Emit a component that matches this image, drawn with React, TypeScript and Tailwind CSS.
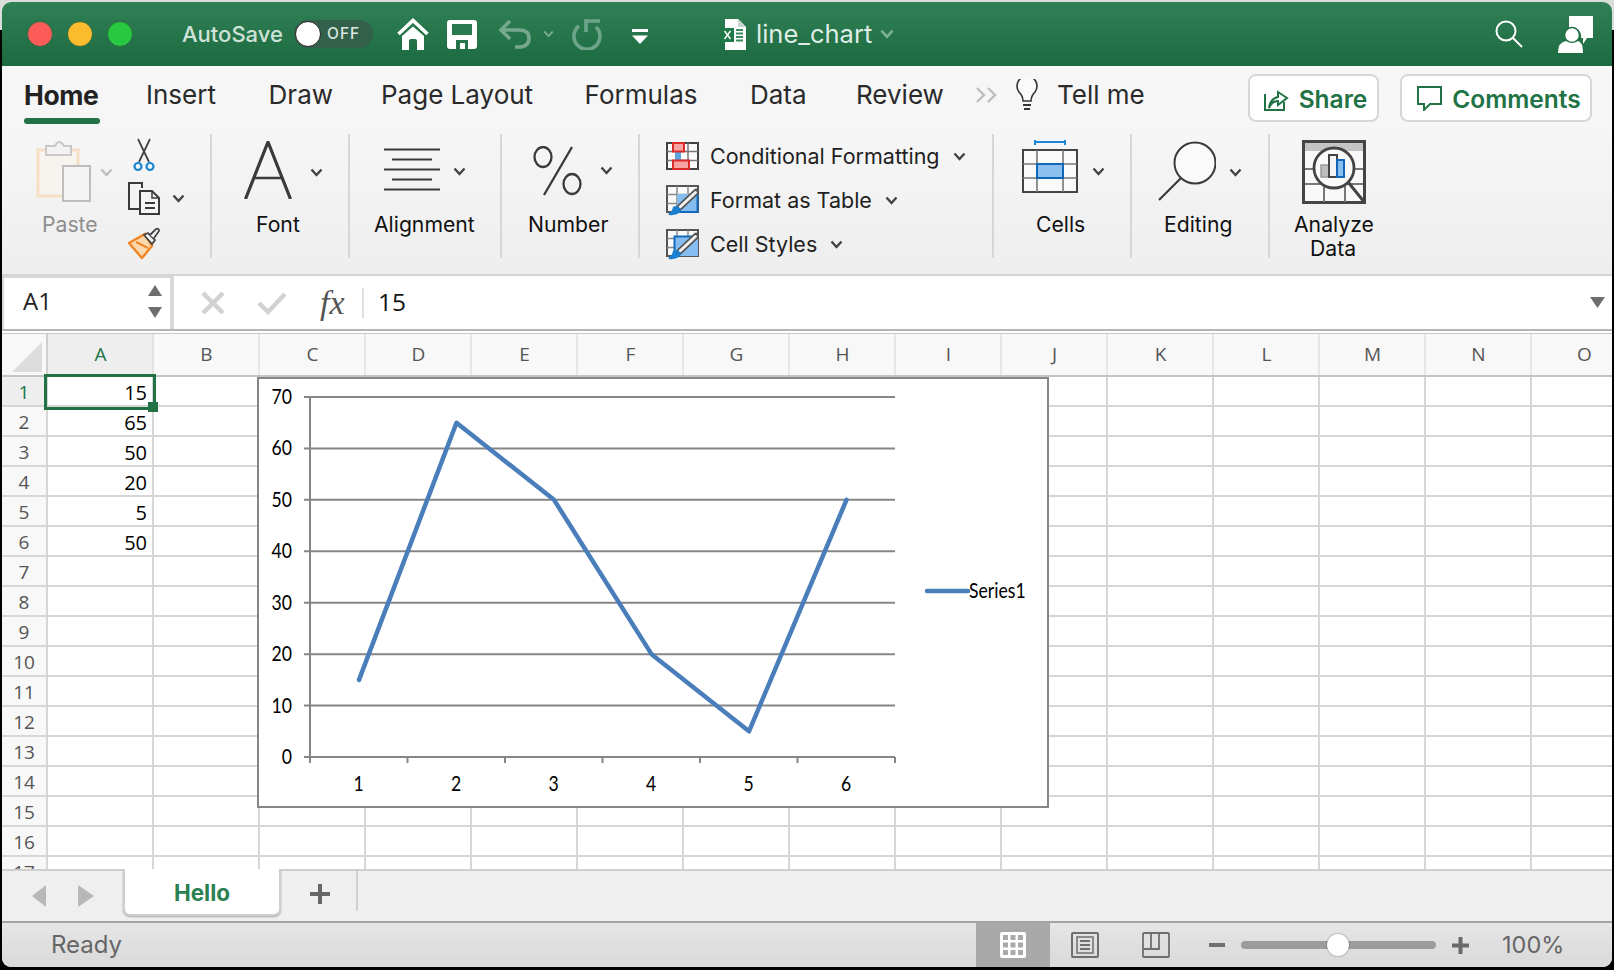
import React from "react";

const Chev = ({ className = "", color = "#444" }: { className?: string; color?: string }) => (
  <svg width="13" height="9" viewBox="0 0 13 9" className={className} fill="none">
    <path d="M1.5 1.5 L6.5 7 L11.5 1.5" stroke={color} strokeWidth="2.4" />
  </svg>
);

const Home = () => (
  <svg width="32" height="32" viewBox="0 0 32 32" className="ml-[24px] mt-[-1px]">
    <path d="M1.5 16 L16 2.5 L30.5 16" stroke="#fff" strokeWidth="3.5" fill="none" />
    <path d="M5 18 L16 8.5 L27 18 V32 H20 V23 Q20 21 18 21 H14 Q12 21 12 23 V32 H5Z" fill="#fff" />
  </svg>
);
const Save = () => (
  <svg width="30" height="29" viewBox="0 0 30 29" className="ml-[18px]">
    <path d="M3 0 H27 Q30 0 30 3 V26 Q30 29 27 29 H3 Q0 29 0 26 V3 Q0 0 3 0Z" fill="#fff" />
    <rect x="5" y="4" width="20" height="11" fill="#2a7a50" />
    <path d="M9 29 V20 H21 V29 H18 V23 H13 V29Z" fill="#26744b" />
  </svg>
);
const Undo = () => (
  <svg width="33" height="30" viewBox="0 0 33 30" className="ml-[21px]" fill="none" stroke="#76a88e" strokeWidth="3.6">
    <path d="M12 2 L3 11 L12 20" />
    <path d="M3 11 H21 Q31 11 31 19 Q31 28 21 28 H17" />
  </svg>
);
const Redo = () => (
  <svg width="32" height="32" viewBox="0 0 32 32" className="ml-[17px]" fill="none" stroke="#6ea58a" strokeWidth="3.6">
    <path d="M15 3 H29" />
    <path d="M15 1 V14" />
    <path d="M8 8 A13 13 0 1 0 25 9" />
  </svg>
);
const Customize = () => (
  <svg width="16" height="15" viewBox="0 0 16 15" className="ml-[29px] mt-[4px]">
    <rect x="0" y="0" width="16" height="3" fill="#fff" />
    <path d="M0 6.5 H16 L8 15Z" fill="#fff" />
  </svg>
);
const DocIcon = () => (
  <svg width="25" height="31" viewBox="0 0 25 31" className="ml-[73px]">
    <path d="M4 0 H17 L25 8 V31 H4Z" fill="#fff" />
    <path d="M17 0 V8 H25Z" fill="#c8d8cf" />
    <rect x="0" y="9" width="13" height="14" fill="#1f7a4a" />
    <path d="M3.5 12 L9.5 20 M9.5 12 L3.5 20" stroke="#fff" strokeWidth="1.5" />
    <path d="M15 11 H22 M15 14.5 H22 M15 18 H22 M15 21.5 H22" stroke="#3a8a60" strokeWidth="2" />
  </svg>
);
const Person = () => (
  <svg width="36" height="37" viewBox="0 0 36 37">
    <path d="M12 0 H36 V22 H30 L26 28 V22 H24 A9 9 0 0 0 12 12Z" fill="#fff" />
    <circle cx="15" cy="19" r="7.5" fill="#fff" stroke="#216f46" strokeWidth="1.5" />
    <path d="M1 37 Q1 26 9 25 Q15 29 21 25 Q26 26 26 37Z" fill="#fff" />
  </svg>
);

const Paste = () => (
  <svg width="60" height="62" viewBox="0 0 60 62" className="ml-[34px]">
    <rect x="2" y="10" width="40" height="46" fill="#f7f4f0" stroke="#f7dfc6" strokeWidth="3" />
    <path d="M10 6 H19 Q23 -2 28 6 H35 V15 H10Z" fill="#f3f3f3" stroke="#c9c9c9" strokeWidth="2" />
    <rect x="27" y="26" width="27" height="35" fill="#f4f4f4" stroke="#bdbdbd" strokeWidth="2" />
  </svg>
);
const Scissors = () => (
  <svg width="22" height="34" viewBox="0 0 22 34" className="ml-[5px]" fill="none">
    <path d="M5 1 L16 24 M17 1 L6 24" stroke="#444" strokeWidth="1.8" />
    <circle cx="5" cy="28.5" r="3.5" stroke="#1b87d4" strokeWidth="2.2" />
    <circle cx="17" cy="28.5" r="3.5" stroke="#1b87d4" strokeWidth="2.2" />
  </svg>
);
const Copy = () => (
  <svg width="32" height="33" viewBox="0 0 32 33" fill="none">
    <path d="M14 6 V1 H1 V27 H12" stroke="#3a3a3a" strokeWidth="2" />
    <path d="M12 9 H24 L31 16 V32 H12Z" fill="#f5f5f5" stroke="#3a3a3a" strokeWidth="2" />
    <path d="M24 9 V16 H31" stroke="#3a3a3a" strokeWidth="1.5" />
    <path d="M17 21 H27 M17 26 H27" stroke="#3a3a3a" strokeWidth="2" />
  </svg>
);
const Brush = () => (
  <svg width="32" height="32" viewBox="0 0 32 32" fill="none">
    <path d="M1 16 L17 7 L24 19 L14 31Z" fill="#fbd9ad" stroke="#ee8526" strokeWidth="2.4" />
    <path d="M8 15 L20 21" stroke="#ee8526" strokeWidth="2" />
    <path d="M16 8 L24 17 L27 13 L20 6Z" fill="#f5f5f5" stroke="#444" strokeWidth="1.8" />
    <path d="M22 8 L28 2 Q31 1 31 4 L26 11" fill="#f5f5f5" stroke="#444" strokeWidth="1.8" />
  </svg>
);
const BigA = () => (
  <svg width="48" height="58" viewBox="0 0 48 58" fill="none" stroke="#3a3a3a">
    <path d="M1.5 58 L24 1 L46.5 58" strokeWidth="3.2" />
    <path d="M10 37 H38" strokeWidth="2.6" />
  </svg>
);
const AlignIcon = () => (
  <svg width="56" height="43" viewBox="0 0 56 43" stroke="#3a3a3a" strokeWidth="2.2">
    <path d="M0 1.5 H56 M8 11.5 H48 M0 21.5 H56 M8 31.5 H48 M0 41.5 H56" />
  </svg>
);
const Percent = () => (
  <svg width="50" height="50" viewBox="0 0 50 50" fill="none" stroke="#3a3a3a" strokeWidth="2.3">
    <ellipse cx="10" cy="11" rx="8.5" ry="10" />
    <ellipse cx="39" cy="38" rx="8.5" ry="10" />
    <path d="M39 1 L11 49" />
  </svg>
);
const CondFmt = () => (
  <svg width="33" height="28" viewBox="0 0 33 28" fill="none">
    <rect x="1" y="1" width="31" height="26" fill="#fafafa" stroke="#444" strokeWidth="2" />
    <path d="M11 1 V27 M22 1 V27 M1 9.5 H32 M1 18.5 H32" stroke="#777" strokeWidth="1.5" />
    <rect x="9" y="9" width="6" height="10" fill="#5aa5e0" />
    <rect x="7" y="1" width="11" height="8.5" fill="#f6a3a3" stroke="#dc2a2a" strokeWidth="2" />
    <rect x="7" y="18.5" width="16" height="8.5" fill="#f6a3a3" stroke="#dc2a2a" strokeWidth="2" />
  </svg>
);
const TableBrush = ({ head = false }: { head?: boolean }) => (
  <svg width="33" height="31" viewBox="0 0 33 31" fill="none">
    <rect x="1" y="1" width="31" height="26" fill="#fafafa" stroke="#555" strokeWidth="2" />
    <path d="M11 1 V27 M22 1 V27 M1 9.5 H32 M1 18.5 H32" stroke="#888" strokeWidth="1.5" />
    {head ? (
      <path d="M9 27 V8 H32 V27Z" fill="#86bdf0" />
    ) : (
      <path d="M11 27 V9 H31 V27Z" fill="#86bdf0" />
    )}
    {head ? <path d="M8.5 27 V7.5 H32" stroke="#1269bd" strokeWidth="2" /> : <path d="M31.5 9 V27 H11" stroke="#1269bd" strokeWidth="2" />}
    <path d="M13 23 L30 7" stroke="#555" strokeWidth="6.5" strokeLinecap="round" />
    <path d="M14 22 L29.5 7.5" stroke="#f2f2f2" strokeWidth="3" strokeLinecap="round" />
    <path d="M7 22 Q11 19 15 24 Q15 29 7 30 Q1 31 3 28 Q6 27 7 22Z" fill="#1b7fd0" />
  </svg>
);
const CellsIcon = () => (
  <svg width="56" height="53" viewBox="0 0 56 53" fill="none">
    <path d="M13 2 H43 M13 0 V5 M43 0 V5" stroke="#1b87d4" strokeWidth="2" />
    <rect x="1" y="10" width="54" height="42" fill="#fafafa" stroke="#444" strokeWidth="2" />
    <path d="M15 10 V52 M41 10 V52 M1 24 H55 M1 38 H55" stroke="#777" strokeWidth="1.6" />
    <rect x="15" y="24" width="26" height="14" fill="#8cc0ee" stroke="#1166b8" strokeWidth="2" />
  </svg>
);
const Magnifier = () => (
  <svg width="58" height="60" viewBox="0 0 58 60" fill="none" stroke="#3a3a3a">
    <circle cx="37" cy="22" r="20.5" fill="#fafafa" strokeWidth="2" />
    <path d="M1 59 L23 37" strokeWidth="2.2" />
  </svg>
);
const Analyze = () => (
  <svg width="64" height="64" viewBox="0 0 64 64" fill="none">
    <rect x="1.5" y="1.5" width="61" height="61" fill="#f9f9f9" stroke="#444" strokeWidth="3" />
    <rect x="3" y="3" width="58" height="8" fill="#c3c3c3" />
    <path d="M3 29 H61 M3 44 H61 M22 44 V62 M43 44 V62" stroke="#777" strokeWidth="2" />
    <circle cx="32" cy="28" r="20" fill="#fafafa" stroke="#444" strokeWidth="2.8" />
    <rect x="19" y="25" width="9" height="12" fill="#bdbdbd" stroke="#999" strokeWidth="1.5" />
    <rect x="27" y="15" width="8" height="22" fill="#f4f4f4" stroke="#444" strokeWidth="2" />
    <rect x="35" y="20" width="7" height="17" fill="#86bff0" stroke="#1166b8" strokeWidth="2" />
    <path d="M46 42 L63 63" stroke="#444" strokeWidth="3" />
  </svg>
);

const Sep = () => <div className="w-[2px] h-[124px] bg-[#d6d6d6] shrink-0 mt-[4px]" />;

const Style = ({ icon, label, chev }: { icon: React.ReactNode; label: string; chev: string }) => (
  <div className="h-[44px] flex items-center">
    <div className="w-[44px] h-[30px] flex items-center">{icon}</div>
    <span className="text-[21.5px] leading-[30px] text-[#1f1f1f] whitespace-nowrap">{label}</span>
    <Chev className={chev} />
  </div>
);

const columns = ["A", "B", "C", "D", "E", "F", "G", "H", "I", "J", "K", "L", "M", "N", "O", "P"];
const values: Record<number, string> = { 1: "15", 2: "65", 3: "50", 4: "20", 5: "5", 6: "50" };
const rows = Array.from({ length: 17 }, (_, i) => i + 1);

const yOf = (v: number) => 398 - 377 + ((70 - v) * 360) / 70;
const points = [15, 65, 50, 20, 5, 50];
const linePts = points.map((v, i) => `${101 + i * 97.5},${yOf(v)}`).join(" ");

const ChartText = ({ x, y, anchor, children }: { x: number; y: number; anchor: "start" | "middle" | "end"; children: React.ReactNode }) => (
  <text transform={`translate(${x} ${y}) scale(0.86 1)`} textAnchor={anchor} fontSize="20.5" fill="#000">
    {children}
  </text>
);

const Chart = () => (
  <div className="absolute left-[257px] top-[377px] w-[792px] h-[431px] bg-white border-2 border-[#868686]">
    <svg width="788" height="427" viewBox="1 3 788 427" className="font-['Lato',sans-serif]">
      {[0, 10, 20, 30, 40, 50, 60, 70].map((v) => (
        <g key={v}>
          <line x1={46} x2={637} y1={yOf(v)} y2={yOf(v)} stroke="#868686" strokeWidth="2" />
          <ChartText x={34} y={yOf(v) + 7} anchor="end">
            {v}
          </ChartText>
        </g>
      ))}
      <line x1={52} x2={52} y1={yOf(70)} y2={yOf(0) + 6} stroke="#868686" strokeWidth="2" />
      {[1, 2, 3, 4, 5, 6].map((n) => (
        <g key={n}>
          <line x1={52 + n * 97.5} x2={52 + n * 97.5} y1={yOf(0)} y2={yOf(0) + 6} stroke="#868686" strokeWidth="2" />
          <ChartText x={100.6 + (n - 1) * 97.5} y={yOf(0) + 34} anchor="middle">
            {n}
          </ChartText>
        </g>
      ))}
      <polyline points={linePts} fill="none" stroke="#4a7ebb" strokeWidth="4.5" strokeLinecap="round" strokeLinejoin="round" />
      <line x1={669} x2={710} y1={215} y2={215} stroke="#4a7ebb" strokeWidth="4.5" strokeLinecap="round" />
      <ChartText x={711} y={222} anchor="start">
        Series1
      </ChartText>
    </svg>
  </div>
);

export default function App() {
  return (
    <div className="w-[1614px] h-[970px] bg-[linear-gradient(to_bottom,#d9dedb_0,#d9dedb_30px,#000_30px)] overflow-hidden pt-[2px] pl-[2px] font-['Inter',sans-serif]">
      <div className="w-[1610px] h-[965px] rounded-[9px] overflow-hidden flex flex-col bg-white relative">
        {/* title bar */}
        <div className="h-[64px] shrink-0 bg-gradient-to-b from-[#308056] to-[#1c6a40] flex items-center text-white pl-[25px]">
          <div className="w-[26px] h-[26px] rounded-full bg-[#fc5c57] border border-[#2b6a48]" />
          <div className="w-[26px] h-[26px] rounded-full bg-[#fdbb2e] border border-[#2b6a48] ml-[14px]" />
          <div className="w-[26px] h-[26px] rounded-full bg-[#28c840] border border-[#2b6a48] ml-[14px]" />
          <span className="ml-[49px] text-[22px] font-medium text-[#cfe2d8] w-[112px] whitespace-nowrap">AutoSave</span>
          <div className="w-[79px] h-[28px] rounded-full bg-[#33604a] flex items-center pl-[1px]">
            <div className="w-[26px] h-[26px] rounded-full bg-white border border-[#222]" />
            <span className="ml-[6px] text-[15.5px] font-medium tracking-[1px] text-[#dbe7e0]">OFF</span>
          </div>
          <Home />
          <Save />
          <Undo />
          <Chev className="ml-[12px] w-[11px] h-[8px]" color="#76a88e" />
          <Redo />
          <Customize />
          <DocIcon />
          <span className="ml-[10px] text-[25.5px] text-[#dfece5] whitespace-nowrap w-[122px]">line_chart</span>
          <Chev className="w-[18px] h-[10px]" color="#7fb097" />
          <svg width="28" height="28" viewBox="0 0 28 28" fill="none" stroke="#fff" strokeWidth="2" className="ml-[599px]">
            <circle cx="11" cy="11" r="9.5" />
            <path d="M18 18 L27 27" />
          </svg>
          <div className="ml-[34px]">
            <Person />
          </div>
        </div>

        {/* tab row */}
        <div className="h-[64px] shrink-0 bg-[#f6f6f6] flex text-[26px] text-[#2a2a2a] leading-[32px]">
          <div className="ml-[22px] w-[76px] shrink-0 pt-[13px] flex flex-col">
            <span className="font-bold text-[26.5px] tracking-[-0.4px] text-[#222]">Home</span>
            <div className="mt-[7px] h-[6px] rounded-full bg-[#217346]" />
          </div>
          <span className="ml-[46px] w-[122.6px] shrink-0 pt-[13px]">Insert</span>
          <span className="w-[112.4px] shrink-0 pt-[13px]">Draw</span>
          <span className="w-[203.6px] shrink-0 pt-[13px] whitespace-nowrap">Page Layout</span>
          <span className="w-[165.4px] shrink-0 pt-[13px]">Formulas</span>
          <span className="w-[106px] shrink-0 pt-[13px]">Data</span>
          <span className="w-[119px] shrink-0 pt-[13px]">Review</span>
          <svg width="24" height="18" viewBox="0 0 24 18" fill="none" stroke="#bdbdbd" strokeWidth="2.4" className="shrink-0 mt-[20px]">
            <path d="M2 2 L9 9 L2 16 M13 2 L20 9 L13 16" />
          </svg>
          <svg width="24" height="32" viewBox="0 0 24 32" fill="none" stroke="#333" strokeWidth="1.6" className="shrink-0 ml-[16px] mt-[13px]">
            <path d="M8 22 Q8 17 4 13 A10 10 0 1 1 20 13 Q16 17 16 22Z" fill="#fafafa" />
            <path d="M8 26 H16 M9 30 H15" strokeWidth="2" />
          </svg>
          <span className="ml-[18px] w-[191px] shrink-0 pt-[13px] whitespace-nowrap">Tell me</span>
          <div className="shrink-0 mt-[8px] w-[131px] h-[48px] pl-[4px] rounded-[8px] bg-white border-2 border-[#d6d6d6] flex items-center justify-center gap-[10px] text-[#217346] font-semibold text-[24.5px]">
            <svg width="25" height="25" viewBox="0 0 25 25" fill="none" stroke="#217346" strokeWidth="2">
              <path d="M1 8 V24 H20 V16" />
              <path d="M5 22 Q6 13 14 11 V6 L23 12 L14 19 V15 Q8 15 5 22Z" />
            </svg>
            <span className="pt-[1px]">Share</span>
          </div>
          <div className="shrink-0 ml-[21px] mt-[8px] w-[192px] h-[48px] pl-[6px] rounded-[8px] bg-white border-2 border-[#d6d6d6] flex items-center justify-center gap-[10px] text-[#217346] font-semibold text-[24.5px]">
            <svg width="25" height="25" viewBox="0 0 25 25" fill="none" stroke="#217346" strokeWidth="2">
              <path d="M1 1 H24 V18 H13 L7 24 V18 H1Z" />
            </svg>
            <span className="pt-[1px]">Comments</span>
          </div>
        </div>

        {/* ribbon */}
        <div className="h-[146px] shrink-0 bg-gradient-to-b from-[#f6f6f6] to-[#eeeeee] flex border-b-2 border-[#d4d4d4] text-[21.2px] text-[#111] leading-[28px]">
          <div className="w-[208px] shrink-0 flex">
            <div className="w-[126px] shrink-0 flex flex-col">
              <div className="h-[80px] flex items-start pt-[10px]">
                <Paste />
                <Chev className="ml-[4px] mt-[28px]" color="#bdbdbd" />
              </div>
              <span className="text-[#8e8e8e] pl-[40px]">Paste</span>
            </div>
            <div className="flex flex-col pt-[8px]">
              <Scissors />
              <div className="flex items-center mt-[10px]">
                <Copy />
                <Chev className="ml-[12px]" />
              </div>
              <div className="mt-[12px]">
                <Brush />
              </div>
            </div>
          </div>
          <Sep />
          <div className="w-[136px] shrink-0 flex flex-col pl-[32px]">
            <div className="h-[80px] flex items-start pt-[11px]">
              <BigA />
              <Chev className="ml-[18px] mt-[27px]" />
            </div>
            <span className="pl-[12px]">Font</span>
          </div>
          <Sep />
          <div className="w-[150px] shrink-0 flex flex-col">
            <div className="h-[80px] flex items-start pt-[18px] pl-[34px]">
              <AlignIcon />
              <Chev className="ml-[13px] mt-[19px]" />
            </div>
            <span className="pl-[24px]">Alignment</span>
          </div>
          <Sep />
          <div className="w-[136px] shrink-0 flex flex-col">
            <div className="h-[80px] flex items-start pt-[16px] pl-[31px]">
              <Percent />
              <Chev className="ml-[17px] mt-[20px]" />
            </div>
            <span className="pl-[26px]">Number</span>
          </div>
          <Sep />
          <div className="w-[352px] shrink-0 flex flex-col pl-[26px] pt-[4px]">
            <Style icon={<CondFmt />} label="Conditional Formatting" chev="ml-[13px]" />
            <Style icon={<TableBrush />} label="Format as Table" chev="ml-[13px]" />
            <Style icon={<TableBrush head />} label="Cell Styles" chev="ml-[13px]" />
          </div>
          <Sep />
          <div className="w-[136px] shrink-0 flex flex-col">
            <div className="h-[80px] flex items-start pt-[10px] pl-[28px]">
              <CellsIcon />
              <Chev className="ml-[14px] mt-[27px]" />
            </div>
            <span className="pl-[42px]">Cells</span>
          </div>
          <Sep />
          <div className="w-[136px] shrink-0 flex flex-col">
            <div className="h-[80px] flex items-start pt-[11px] pl-[26px]">
              <Magnifier />
              <Chev className="ml-[13px] mt-[27px]" />
            </div>
            <span className="pl-[32px]">Editing</span>
          </div>
          <Sep />
          <div className="flex flex-col pl-[24px]">
            <div className="h-[80px] flex items-start pt-[10px] pl-[8px]">
              <Analyze />
            </div>
            <span className="w-[78px] text-center leading-[24px] mt-[2px]">Analyze Data</span>
          </div>
        </div>

        {/* formula bar */}
        <div className="h-[55px] shrink-0 bg-white flex items-center font-['Open_Sans',sans-serif] border-b-[2px] border-[#b5b5b5]">
          <div className="w-[172px] h-full pb-[5px] border-r-4 border-l-2 border-t-2 border-[#d8d8d8] flex items-center pl-[19px] text-[24px] text-[#222]">
            <span className="w-[125px]">A1</span>
            <div className="flex flex-col gap-[11px]">
              <svg width="14" height="11" viewBox="0 0 14 11"><path d="M7 0 L14 11 H0Z" fill="#6e6e6e" /></svg>
              <svg width="14" height="11" viewBox="0 0 14 11"><path d="M7 11 L14 0 H0Z" fill="#6e6e6e" /></svg>
            </div>
          </div>
          <svg width="24" height="24" viewBox="0 0 24 24" stroke="#d2d2d2" strokeWidth="4.5" className="ml-[27px]">
            <path d="M2 2 L22 22 M22 2 L2 22" />
          </svg>
          <svg width="30" height="24" viewBox="0 0 30 24" fill="none" stroke="#d2d2d2" strokeWidth="4.5" className="ml-[32px]">
            <path d="M2 12 L11 21 L28 3" />
          </svg>
          <span className="ml-[33px] w-[42px] font-['Liberation_Serif',serif] italic text-[34px] text-[#555]">fx</span>
          <div className="w-[2px] h-[30px] bg-[#e0e0e0]" />
          <span className="ml-[14px] text-[24.5px] text-[#111]">15</span>
          <svg width="15" height="11" viewBox="0 0 15 11" className="ml-auto mr-[7px]">
            <path d="M0 0 H15 L7.5 11Z" fill="#6e6e6e" />
          </svg>
        </div>

        {/* sheet */}
        <div className="h-[538px] shrink-0 overflow-hidden font-['Open_Sans',sans-serif] bg-white pt-[2px] relative">
          <div className="flex h-[44px] bg-[#f8f8f8] border-b-2 border-[#c4c4c4] border-t border-t-[#c8c8c8]">
            <div className="w-[46px] shrink-0 border-r-2 border-[#cfcfcf] flex items-end justify-end pb-[3px] pr-[4px]">
              <svg width="30" height="30" viewBox="0 0 30 30"><path d="M30 0 V30 H0Z" fill="#dcdcdc" /></svg>
            </div>
            {columns.map((c, i) => (
              <div
                key={c}
                className={
                  i === 0
                    ? "w-[106px] shrink-0 flex items-center justify-center text-[19px] text-[#217346] bg-[#eeeeee] border-r-2 border-[#e2e2e2]"
                    : "w-[106px] shrink-0 flex items-center justify-center text-[19px] text-[#555] border-r-2 border-[#e6e6e6]"
                }
              >
                <span className="pl-[1px]">{c}</span>
              </div>
            ))}
          </div>
          {rows.map((r) => (
            <div key={r} className="flex h-[30px]">
              <div
                className={
                  r === 1
                    ? "w-[46px] shrink-0 bg-[#eeeeee] border-r-2 border-b-2 border-[#d6d6d6] text-[#217346] text-[19px] leading-[30px] text-center"
                    : "w-[46px] shrink-0 bg-[#f8f8f8] border-r-2 border-b-2 border-[#d6d6d6] text-[#555] text-[19px] leading-[30px] text-center"
                }
              >
                {r}
              </div>
              {columns.map((c, i) => (
                <div
                  key={c}
                  className="w-[106px] shrink-0 border-r-2 border-b-2 border-[#d6d6d6] text-right pr-[5px] text-[20px] leading-[31px] text-black"
                >
                  {i === 0 ? values[r] : ""}
                </div>
              ))}
            </div>
          ))}
        </div>

        {/* selection and chart float over the sheet */}
        <div className="absolute left-[42px] top-[372px] w-[112px] h-[36px] border-[3px] border-[#217346]" />
        <div className="absolute left-[146px] top-[400px] w-[10px] h-[10px] bg-[#217346]" />
        <div className="absolute left-[-2px] top-[-2px]">
          <Chart />
        </div>

        {/* sheet tabs */}
        <div className="h-[54px] shrink-0 bg-[#efefef] border-t-2 border-[#cfcfcf] flex items-start border-b-2 border-b-[#a5a5a5]">
          <svg width="14" height="22" viewBox="0 0 14 22" className="ml-[30px] mt-[14px]"><path d="M14 0 V22 L0 11Z" fill="#b8b8b8" /></svg>
          <svg width="16" height="22" viewBox="0 0 16 22" className="ml-[32px] mt-[14px]"><path d="M0 0 V22 L16 11Z" fill="#b8b8b8" /></svg>
          <div className="ml-[29px] mt-[-2px] w-[158px] h-[47px] pt-[3px] bg-white rounded-b-[7px] border-2 border-t-0 border-[#cfcfcf] shadow-[0_1px_2px_rgba(0,0,0,0.3)] flex items-center justify-center text-[#2a8050] font-bold text-[22.5px]">
            Hello
          </div>
          <svg width="20" height="20" viewBox="0 0 20 20" className="ml-[29px] mt-[13px]"><path d="M8 0 H12 V8 H20 V12 H12 V20 H8 V12 H0 V8 H8Z" fill="#666" /></svg>
          <div className="w-[2px] h-[40px] bg-[#d0d0d0] ml-[26px]" />
        </div>

        {/* status bar */}
        <div className="flex-1 bg-gradient-to-b from-[#e6e6e6] to-[#d9d9d9] flex items-center">
          <span className="ml-[49px] w-[71px] text-[24px] text-[#666]">Ready</span>
          <div className="ml-[854px] w-[74px] self-stretch bg-[#a9a9a9] flex items-center justify-center">
            <svg width="26" height="26" viewBox="0 0 26 26">
              <rect width="26" height="26" rx="2" fill="#fff" />
              <path d="M3 3 H8 V8 H3Z M10.5 3 H15.5 V8 H10.5Z M18 3 H23 V8 H18Z M3 10.5 H8 V15.5 H3Z M10.5 10.5 H15.5 V15.5 H10.5Z M18 10.5 H23 V15.5 H18Z M3 18 H8 V23 H3Z M10.5 18 H15.5 V23 H10.5Z M18 18 H23 V23 H18Z" fill="#a9a9a9" />
            </svg>
          </div>
          <svg width="28" height="26" viewBox="0 0 28 26" fill="none" stroke="#6f6f6f" className="ml-[21px]">
            <rect x="1" y="1" width="26" height="24" rx="1" strokeWidth="2" />
            <rect x="6" y="5" width="16" height="16" strokeWidth="1.5" />
            <path d="M9 9 H19 M9 13 H19 M9 17 H19" strokeWidth="2" />
          </svg>
          <svg width="28" height="26" viewBox="0 0 28 26" fill="none" stroke="#6f6f6f" strokeWidth="1.8" className="ml-[43px]">
            <rect x="1" y="1" width="26" height="24" rx="1" />
            <path d="M1 17 H17 V1 M9 1 V17" />
          </svg>
          <div className="w-[16px] h-[4px] bg-[#707070] ml-[39px]" />
          <div className="w-[195px] h-[8px] rounded-full bg-[#9c9c9c] ml-[16px] flex items-center">
            <div className="w-[22px] h-[22px] rounded-full bg-white shadow-[0_0_2px_rgba(0,0,0,0.5)] ml-[86px]" />
          </div>
          <svg width="17" height="17" viewBox="0 0 17 17" className="ml-[16px]"><path d="M6.5 0 H10.5 V6.5 H17 V10.5 H10.5 V17 H6.5 V10.5 H0 V6.5 H6.5Z" fill="#6a6a6a" /></svg>
          <span className="ml-[33px] text-[23.5px] text-[#666]">100%</span>
        </div>
      </div>
    </div>
  );
}
